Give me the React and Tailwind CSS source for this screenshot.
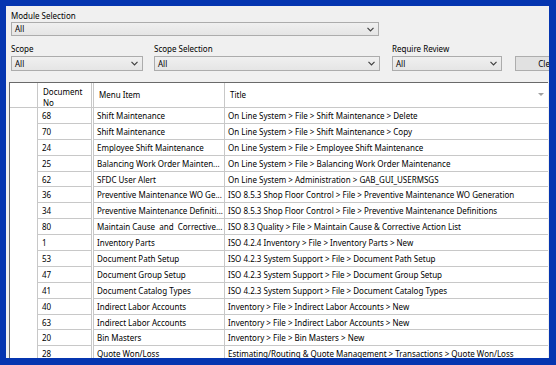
const ROWS = [
  ["68", "Shift Maintenance", "On Line System > File > Shift Maintenance > Delete"],
  ["70", "Shift Maintenance", "On Line System > File > Shift Maintenance > Copy"],
  ["24", "Employee Shift Maintenance", "On Line System > File > Employee Shift Maintenance"],
  ["25", "Balancing Work Order Mainten...", "On Line System > File > Balancing Work Order Maintenance"],
  ["62", "SFDC User Alert", "On Line System > Administration > GAB_GUI_USERMSGS"],
  ["36", "Preventive Maintenance WO Ge...", "ISO 8.5.3 Shop Floor Control > File > Preventive Maintenance WO Generation"],
  ["34", "Preventive Maintenance Definiti...", "ISO 8.5.3 Shop Floor Control > File > Preventive Maintenance Definitions"],
  ["80", "Maintain Cause  and  Corrective...", "ISO 8.3 Quality > File > Maintain Cause & Corrective Action List"],
  ["1", "Inventory Parts", "ISO 4.2.4 Inventory > File > Inventory Parts > New"],
  ["53", "Document Path Setup", "ISO 4.2.3 System Support > File > Document Path Setup"],
  ["47", "Document Group Setup", "ISO 4.2.3 System Support > File > Document Group Setup"],
  ["41", "Document Catalog Types", "ISO 4.2.3 System Support > File > Document Catalog Types"],
  ["40", "Indirect Labor Accounts", "Inventory > File > Indirect Labor Accounts > New"],
  ["63", "Indirect Labor Accounts", "Inventory > File > Indirect Labor Accounts > New"],
  ["20", "Bin Masters", "Inventory > File > Bin Masters > New"],
  ["28", "Quote Won/Loss", "Estimating/Routing & Quote Management > Transactions > Quote Won/Loss"],
];

function Chevron() {
  return (
    <svg width="7" height="5" viewBox="0 0 7 5" className="shrink-0">
      <path d="M0.5 0.8 L3.5 3.8 L6.5 0.8" fill="none" stroke="#404040" strokeWidth="1.2" />
    </svg>
  );
}

function Combo({ className }) {
  return (
    <div
      className={`flex h-[15px] items-center justify-between border border-[#acacac] bg-gradient-to-b from-[#f0f0f0] to-[#e5e5e5] pl-[3px] pr-[4px] ${className}`}
    >
      <span>All</span>
      <Chevron />
    </div>
  );
}

export default function App() {
  return (
    <div
      className="h-[365px] w-[556px] overflow-hidden bg-[#0535b0] pl-[6px] pt-[6px]"
      style={{ fontFamily: '"Noto Sans", "Open Sans", sans-serif' }}
    >
      <div className="flex h-[352px] w-[543px] flex-col overflow-hidden bg-[#f0f0f0] text-[8px] text-black">
        <div className="pl-[5px] pt-[4px] leading-[11px]">Module Selection</div>
        <Combo className="ml-[5px] mt-[1px] w-[368px]" />

        <div className="mt-[7px] flex items-end pl-[5px]">
          <div className="flex w-[132px] flex-col gap-[2px]">
            <span className="leading-[11px]">Scope</span>
            <Combo className="w-[132px]" />
          </div>
          <div className="ml-[11px] flex w-[226px] flex-col gap-[2px]">
            <span className="leading-[11px]">Scope Selection</span>
            <Combo className="w-[226px]" />
          </div>
          <div className="ml-[12px] flex w-[110px] flex-col gap-[2px]">
            <span className="leading-[11px]">Require Review</span>
            <Combo className="w-[110px]" />
          </div>
          <div className="ml-[13px] flex h-[15px] w-[66px] shrink-0 items-center justify-center border border-[#adadad] bg-[#e1e1e1]">
            Clear
          </div>
        </div>

        <div className="ml-[3px] mt-[11px] w-[539px] flex-1 border-l border-t border-[#6a6a6a] bg-white">
          <div className="flex h-[25px] border-b border-[#c8c8c8]">
            <div className="w-[28px] shrink-0 border-r border-[#c8c8c8]" />
            <div className="w-[53px] shrink-0 pl-[5px] pt-[3px] leading-[11px]">
              Document
              <br />
              No
            </div>
            <div className="w-[3px] shrink-0 border-x border-[#c8c8c8]" />
            <div className="flex w-[130px] shrink-0 items-center pl-[5px]">Menu Item</div>
            <div className="flex flex-1 items-center justify-between border-l border-[#c8c8c8] pl-[5px] pr-[4px]">
              <span>Title</span>
              <svg width="6" height="4" viewBox="0 0 6 4">
                <path d="M0 0 L6 0 L3 3 Z" fill="#a0a0a0" />
              </svg>
            </div>
          </div>
          {ROWS.map(([no, menu, title]) => (
            <div key={no + title} className="flex h-[15.9px] leading-[15px]">
              <div className="w-[28px] shrink-0 border-r border-[#c8c8c8]" />
              <div className="w-[53px] shrink-0 border-b border-[#c8c8c8] pl-[4px]">{no}</div>
              <div className="w-[3px] shrink-0 border-x border-[#c8c8c8]" />
              <div className="w-[130px] shrink-0 overflow-hidden whitespace-pre border-b border-[#c8c8c8] pl-[3px]">
                {menu}
              </div>
              <div className="flex-1 overflow-hidden whitespace-nowrap border-b border-l border-[#c8c8c8] pl-[3px]">
                {title}
              </div>
            </div>
          ))}
        </div>
      </div>
    </div>
  );
}
